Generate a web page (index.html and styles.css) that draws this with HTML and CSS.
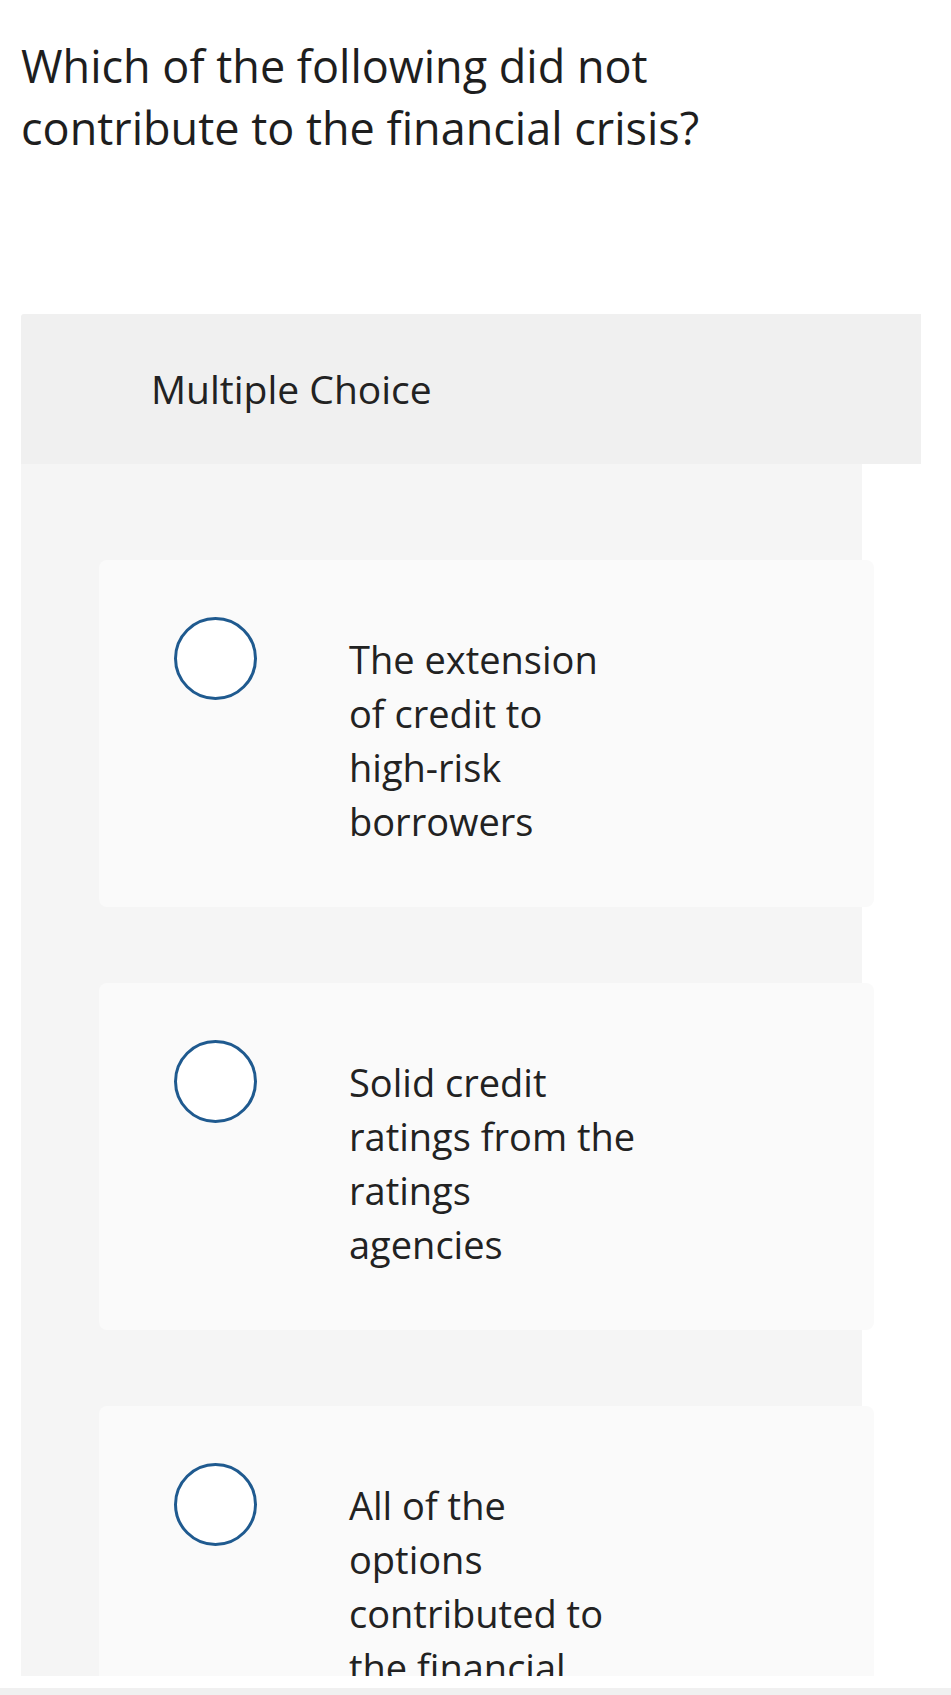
FILE: index.html
```html
<!DOCTYPE html>
<html lang="en">
<head>
    <meta charset="UTF-8">
    <meta name="viewport" content="width=device-width, initial-scale=1.0">
    <title>Multiple Choice</title>
    <link rel="stylesheet" href="styles.css">
</head>
<body>
    <div class="viewport">
        <h1 class="question">Which of the following did not contribute to the financial crisis?</h1>

        <div class="choice-panel">
            <div class="choice-header">Multiple Choice</div>
            <div class="choice-list">
                <label class="option">
                    <span class="radio"></span>
                    <span class="option-text">The extension of credit to <span class="nowrap">high-risk</span> borrowers</span>
                </label>
                <label class="option">
                    <span class="radio"></span>
                    <span class="option-text">Solid credit <span class="nowrap">ratings from the</span> ratings agencies</span>
                </label>
                <label class="option">
                    <span class="radio"></span>
                    <span class="option-text">All of the options contributed to the financial crisis.</span>
                </label>
            </div>
        </div>
    </div>
    <div class="bottom-bar"></div>
</body>
</html>
```

FILE: styles.css
```css
body {
    margin: 0;
    padding: 0;
    background-color: #fff;
    font-family: "Open Sans", Lato, Arial, sans-serif;
    font-variant-ligatures: none;
    color: #222;
}
.viewport {
    height: 1676px;
    overflow: hidden;
}
.question {
    margin: 0;
    padding: 35px 21px 0 21px;
    max-width: 720px;
    font-size: 45px;
    font-weight: normal;
    line-height: 62px;
    color: #1e1e1e;
}
.choice-panel {
    margin: 155px 0 0 21px;
}
.choice-header {
    width: 900px;
    height: 150px;
    box-sizing: border-box;
    padding: 51px 0 0 130px;
    background-color: #f0f0f0;
    font-size: 39px;
    line-height: 48px;
    border-radius: 3px 0 0 0;
}
.choice-list {
    width: 841px;
    padding-top: 96px;
    display: flex;
    flex-direction: column;
    gap: 76px;
    background-color: #f5f5f5;
    min-height: 1300px;
}
.option {
    display: flex;
    align-items: flex-start;
    width: 775px;
    box-sizing: border-box;
    margin-left: 78px;
    padding: 57px 0 59px 75px;
    background-color: #fafafa;
    border-radius: 8px;
    cursor: pointer;
}
.radio {
    flex: none;
    width: 83px;
    height: 83px;
    box-sizing: border-box;
    border: 3px solid #1f5a8f;
    border-radius: 50%;
    background-color: #fff;
}
.option-text {
    margin: 15px 0 0 92px;
    width: 280px;
    font-size: 38px;
    line-height: 54px;
}
.nowrap {
    white-space: nowrap;
}
.bottom-bar {
    margin-top: 12px;
    height: 7px;
    background-color: #f0f0f0;
}
```
